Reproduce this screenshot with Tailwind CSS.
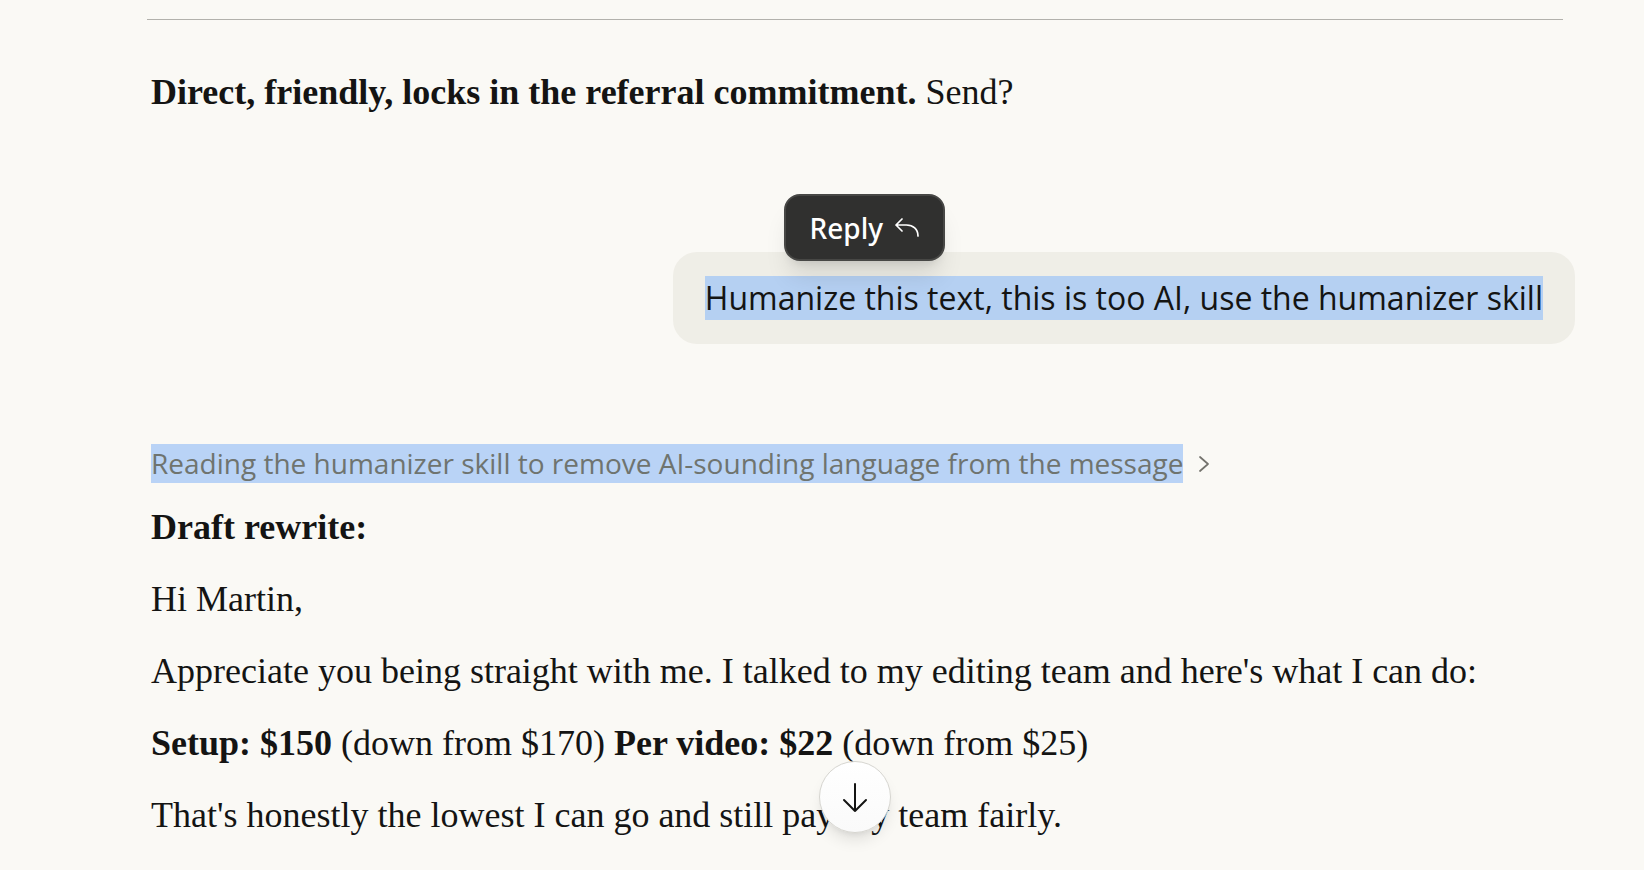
<!DOCTYPE html>
<html lang="en">
<head>
  <meta charset="UTF-8">
  <meta name="viewport" content="width=device-width, initial-scale=1.0">
  <title>Chat</title>
  <script src="https://cdn.jsdelivr.net/npm/@tailwindcss/browser@4"></script>
</head>
<body class="bg-[#faf9f5] text-[#141413] font-['Liberation_Serif',serif] text-[36px] leading-[48px]">
  <main class="relative min-h-screen pl-[147px] pr-[81px] pt-[19px] pb-6">
    <hr class="border-t border-[#b2b1ac]">

    <!-- Previous assistant message -->
    <p class="mt-12 px-1"><strong>Direct, friendly, locks in the referral commitment.</strong> Send?</p>

    <!-- User message -->
    <div class="mt-[136px] -mr-3 flex justify-end">
      <div class="relative rounded-3xl bg-[#efeee7] px-8 py-6 font-['Open_Sans',sans-serif] text-[32px] leading-[44px]">
        <p><mark class="block bg-[#b5d0f2] text-[#141413]">Humanize this text, this is too AI, use the humanizer skill</mark></p>
        <button type="button" class="absolute right-[630px] -top-[58px] flex h-[67px] items-center gap-3 rounded-2xl border-2 border-[#474745] bg-[#30302f] px-6 font-['Noto_Sans',sans-serif] text-[28px] font-medium text-white shadow-xl shadow-black/10">
          Reply
          <svg class="h-6 w-6" viewBox="0 0 24 24" fill="none" stroke="currentColor" stroke-width="1.7" stroke-linecap="round" stroke-linejoin="round" aria-hidden="true">
            <path d="M7 3 1 9l6 6M1 9h10.500C18 9 23 13 23 20"/>
          </svg>
        </button>
      </div>
    </div>

    <!-- Assistant reply -->
    <button type="button" class="mt-[100px] flex items-center gap-4 px-1 font-['Open_Sans',sans-serif] text-[28px] leading-[39px] text-[#73726c]">
      <mark class="bg-[#b9d3f6] text-[#6f746f]">Reading the humanizer skill to remove AI-sounding language from the message</mark>
      <svg class="h-4 w-2.5" viewBox="0 0 10 16" fill="none" stroke="currentColor" stroke-width="1.7" stroke-linecap="round" stroke-linejoin="round" aria-hidden="true">
        <path d="M1 1l8 7-8 7"/>
      </svg>
    </button>
    <div class="mt-5 flex flex-col gap-6 px-1">
      <p><strong>Draft rewrite:</strong></p>
      <p>Hi Martin,</p>
      <p>Appreciate you being straight with me. I talked to my editing team and here's what I can do:</p>
      <p><strong>Setup: $150</strong> (down from $170) <strong>Per video: $22</strong> (down from $25)</p>
      <p>That's honestly the lowest I can go and still pay my team fairly.</p>
    </div>

    <!-- Scroll to bottom -->
    <div class="pointer-events-none absolute bottom-[37px] left-[147px] right-[81px] flex justify-center">
      <button type="button" aria-label="Scroll to bottom" class="pointer-events-auto flex h-[72px] w-[72px] items-center justify-center rounded-full border border-[#d6d5d0] bg-linear-to-b from-white to-[#fafafa] shadow-lg shadow-black/10">
        <svg class="h-8 w-8" viewBox="0 0 32 32" fill="none" stroke="currentColor" stroke-width="2" stroke-linecap="round" stroke-linejoin="round" aria-hidden="true">
          <path d="M16 3v27M5 19l11 11 11-11"/>
        </svg>
      </button>
    </div>
  </main>
</body>
</html>
